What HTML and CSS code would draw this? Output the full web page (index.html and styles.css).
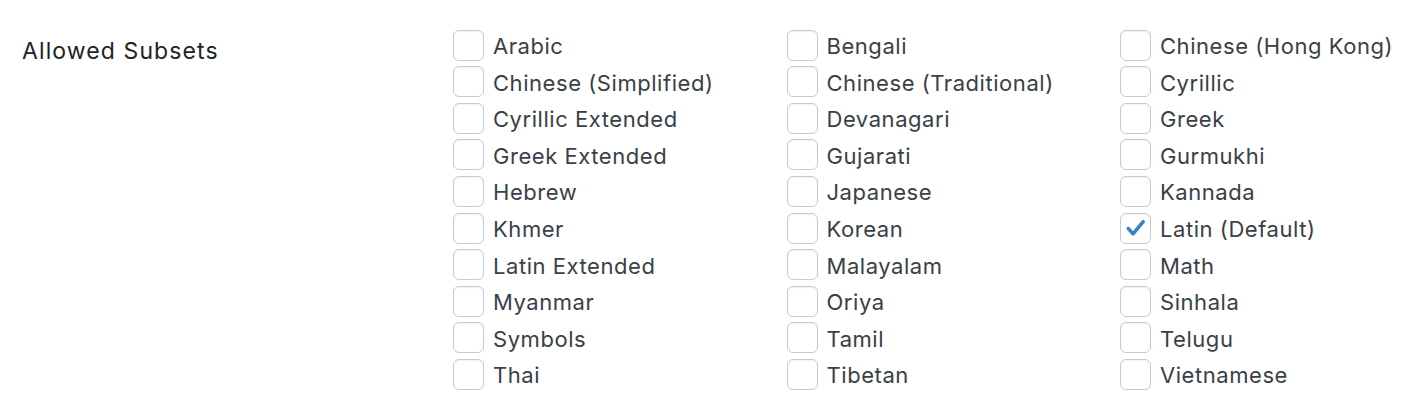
FILE: index.html
```html
<!DOCTYPE html>
<html>
<head>
<meta charset="utf-8">
<link rel="stylesheet" href="styles.css">
</head>
<body>
<div class="setting">
  <div class="label">Allowed Subsets</div>
  <div class="options">
    <label class="opt"><span class="box"></span><span>Arabic</span></label>
    <label class="opt"><span class="box"></span><span>Bengali</span></label>
    <label class="opt"><span class="box"></span><span>Chinese (Hong Kong)</span></label>
    <label class="opt"><span class="box"></span><span>Chinese (Simplified)</span></label>
    <label class="opt"><span class="box"></span><span>Chinese (Traditional)</span></label>
    <label class="opt"><span class="box"></span><span>Cyrillic</span></label>
    <label class="opt"><span class="box"></span><span>Cyrillic Extended</span></label>
    <label class="opt"><span class="box"></span><span>Devanagari</span></label>
    <label class="opt"><span class="box"></span><span>Greek</span></label>
    <label class="opt"><span class="box"></span><span>Greek Extended</span></label>
    <label class="opt"><span class="box"></span><span>Gujarati</span></label>
    <label class="opt"><span class="box"></span><span>Gurmukhi</span></label>
    <label class="opt"><span class="box"></span><span>Hebrew</span></label>
    <label class="opt"><span class="box"></span><span>Japanese</span></label>
    <label class="opt"><span class="box"></span><span>Kannada</span></label>
    <label class="opt"><span class="box"></span><span>Khmer</span></label>
    <label class="opt"><span class="box"></span><span>Korean</span></label>
    <label class="opt"><span class="box checked"><svg viewBox="0 0 30 30" width="30" height="30"><path d="M7.5 15.5 L12.5 21 L23 8.5" fill="none" stroke="#3582c4" stroke-width="3.6" stroke-linecap="round" stroke-linejoin="round"/></svg></span><span>Latin (Default)</span></label>
    <label class="opt"><span class="box"></span><span>Latin Extended</span></label>
    <label class="opt"><span class="box"></span><span>Malayalam</span></label>
    <label class="opt"><span class="box"></span><span>Math</span></label>
    <label class="opt"><span class="box"></span><span>Myanmar</span></label>
    <label class="opt"><span class="box"></span><span>Oriya</span></label>
    <label class="opt"><span class="box"></span><span>Sinhala</span></label>
    <label class="opt"><span class="box"></span><span>Symbols</span></label>
    <label class="opt"><span class="box"></span><span>Tamil</span></label>
    <label class="opt"><span class="box"></span><span>Telugu</span></label>
    <label class="opt"><span class="box"></span><span>Thai</span></label>
    <label class="opt"><span class="box"></span><span>Tibetan</span></label>
    <label class="opt"><span class="box"></span><span>Vietnamese</span></label>
  </div>
</div>
</body>
</html>
```
FILE: styles.css
```css
html, body {
  margin: 0;
  padding: 0;
  background: #ffffff;
}
body {
  font-family: Inter, "Noto Sans", sans-serif;
  font-size: 22px;
  color: #3a4047;
}
.setting {
  display: flex;
  padding: 28px 0 0 22px;
}
.label {
  width: 431px;
  flex: none;
  color: #1d2327;
  font-size: 23px;
  padding-top: 10px;
  line-height: 26px;
  letter-spacing: 1.1px;
}
.options {
  display: grid;
  grid-template-columns: repeat(3, 333.5px);
  grid-auto-rows: 36.56px;
  letter-spacing: 0.55px;
}
.opt {
  display: flex;
  align-items: center;
  gap: 9px;
}
.box {
  width: 29px;
  height: 29px;
  border: 1px solid #c9cacc;
  border-radius: 6px;
  box-shadow: inset 0 1px 2px rgba(0,0,0,0.06);
  flex: none;
  display: flex;
  align-items: center;
  justify-content: center;
  margin-top: -2px;
}
.box svg {
  display: block;
}
```
